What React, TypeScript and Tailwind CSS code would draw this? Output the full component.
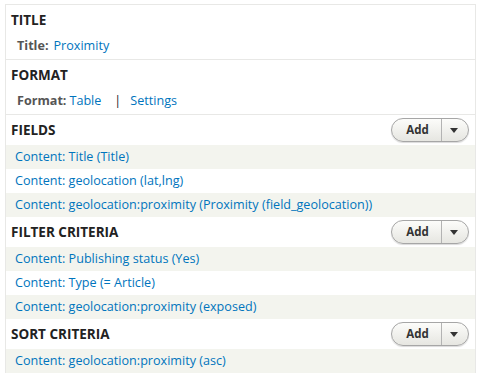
const font = { fontFamily: '"Open Sans", "Noto Sans", sans-serif' };

const AddButton = () => (
  <div className="flex h-[24px] w-[78px] items-stretch rounded-full border border-[#a6a6a6] bg-gradient-to-b from-[#fcfcfa] to-[#e6e6e1] shadow-[0_1px_1px_rgba(0,0,0,0.15)]">
    <button className="flex flex-1 items-center justify-center pl-[2px] text-[11.5px] font-bold text-[#333]">Add</button>
    <div className="w-px bg-[#b3b3b3]" />
    <div className="flex w-[26px] items-center justify-center pr-[2px]">
      <svg width="8" height="5" viewBox="0 0 8 5">
        <path d="M0 0 L8 0 L4 5 Z" fill="#333" />
      </svg>
    </div>
  </div>
);

const Header = ({ title, withButton }: { title: string; withButton?: boolean }) => (
  <div className="flex h-[30px] items-center justify-between pl-[5px] pr-[6px]">
    <h2 className="text-[13.5px] font-bold text-[#222]">{title}</h2>
    {withButton && <AddButton />}
  </div>
);

const Row = ({ text, odd }: { text: string; odd: boolean }) => (
  <div className={`flex h-[24px] items-center pl-[9px] ${odd ? "bg-[#f3f4ee]" : "bg-white"}`}>
    <a className="text-[12.6px] text-[#0074bd]">{text}</a>
  </div>
);

const sections = [
  {
    title: "FIELDS",
    rows: [
      "Content: Title (Title)",
      "Content: geolocation (lat,lng)",
      "Content: geolocation:proximity (Proximity (field_geolocation))",
    ],
  },
  {
    title: "FILTER CRITERIA",
    rows: [
      "Content: Publishing status (Yes)",
      "Content: Type (= Article)",
      "Content: geolocation:proximity (exposed)",
    ],
  },
  {
    title: "SORT CRITERIA",
    rows: ["Content: geolocation:proximity (asc)"],
  },
];

export default function App() {
  return (
    <div className="min-h-[385px] bg-white pl-[5px] pt-[4px]" style={font}>
      <div className="w-[471px] border-x border-t border-[#e8e8e6]">
        <div className="border-b border-[#e8e8e6] pb-[2px]">
          <Header title="TITLE" />
          <div className="flex h-[22px] items-center pl-[11px] text-[12.6px]">
            <span className="mr-[5px] font-bold text-[#555]">Title:</span>
            <a className="text-[#0074bd]">Proximity</a>
          </div>
        </div>
        <div className="border-b border-[#e8e8e6] pb-[2px]">
          <Header title="FORMAT" />
          <div className="flex h-[22px] items-center pl-[11px] text-[12.6px]">
            <span className="mr-[3px] font-bold text-[#555]">Format:</span>
            <a className="text-[#0074bd]">Table</a>
            <span className="ml-[13px] mr-[9px] text-[#222]">|</span>
            <a className="text-[#0074bd]">Settings</a>
          </div>
        </div>
        {sections.map((s) => (
          <div key={s.title}>
            <Header title={s.title} withButton />
            {s.rows.map((r, i) => (
              <Row key={r} text={r} odd={i % 2 === 0} />
            ))}
          </div>
        ))}
      </div>
    </div>
  );
}
